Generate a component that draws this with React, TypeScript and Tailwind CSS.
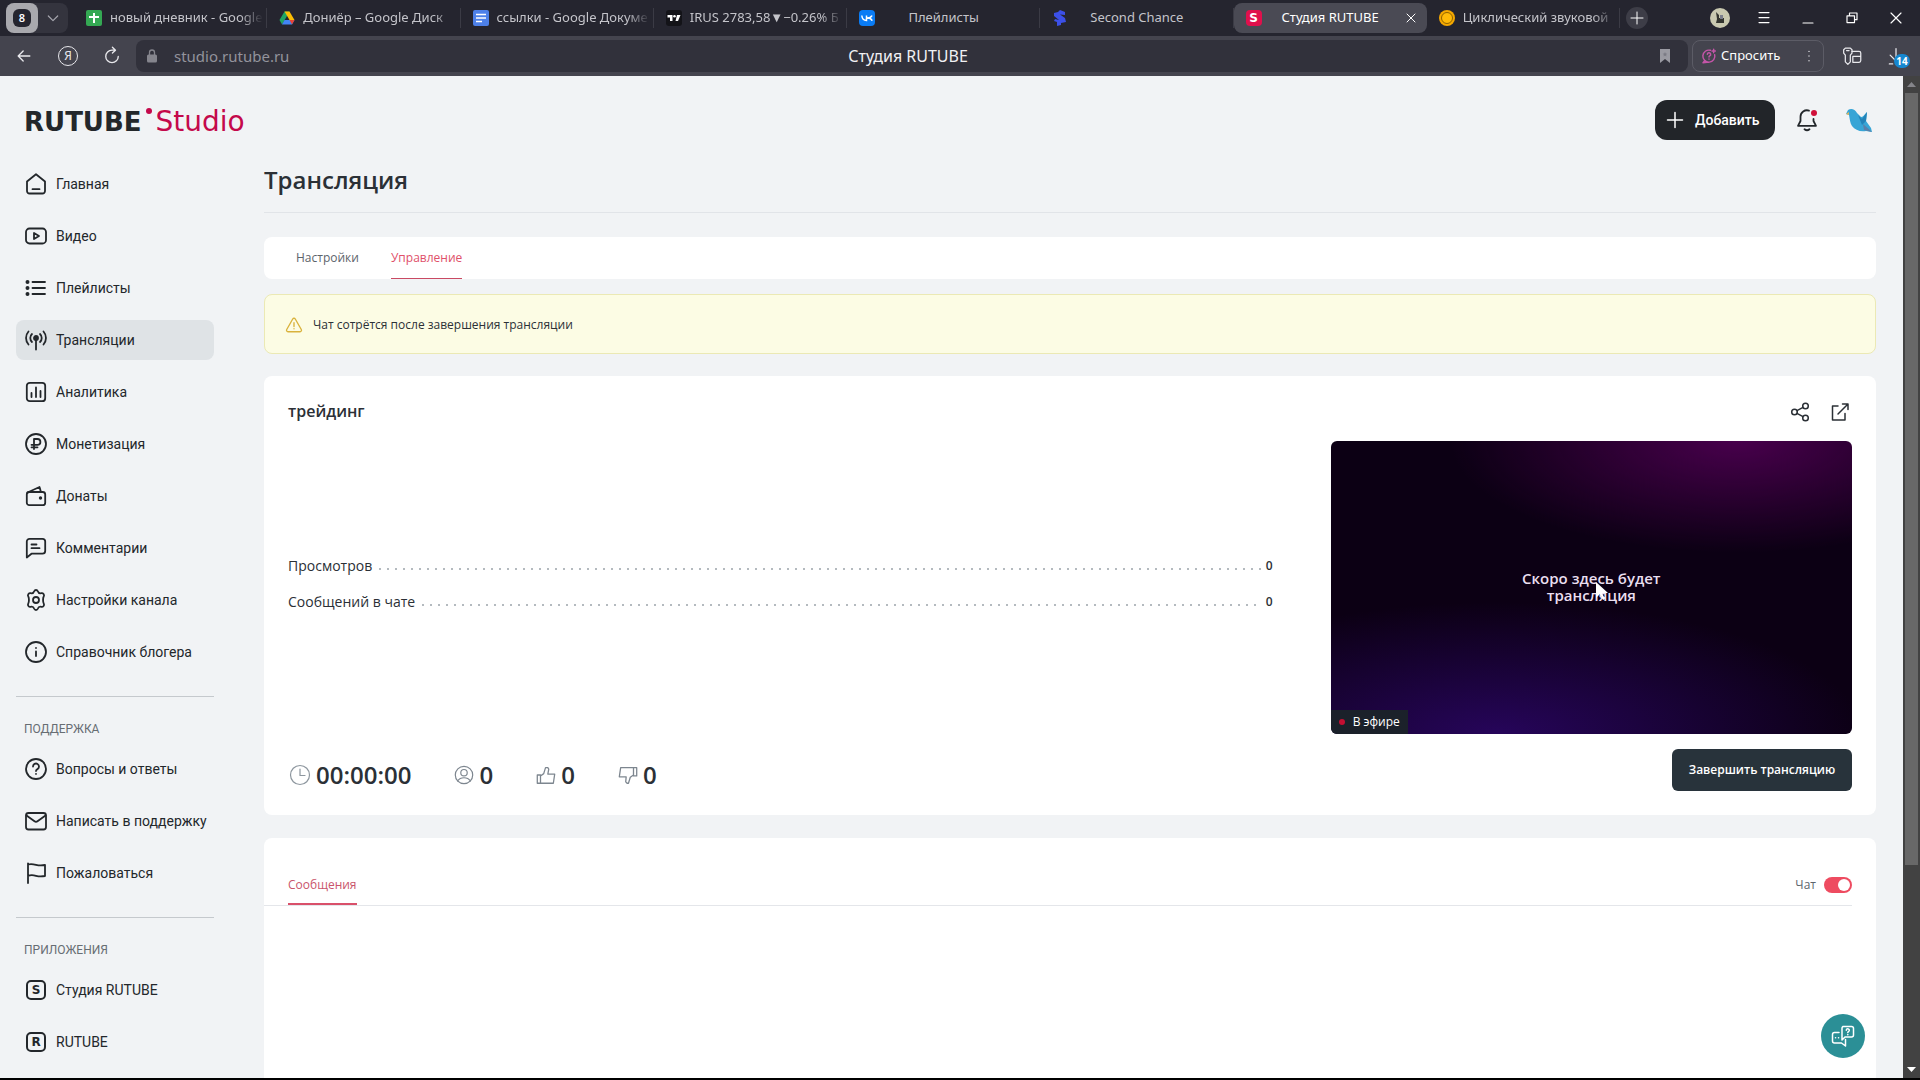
import { useState } from "react";
import type { ReactNode } from "react";

interface BrowserTab {
  title: string;
  icon: ReactNode;
  long?: boolean;
  active?: boolean;
}

interface NavItem {
  label: string;
  icon: ReactNode;
  active?: boolean;
}

interface IconProps {
  children: ReactNode;
  className?: string;
  strokeWidth?: number;
}

function Icon({ children, className = "size-6", strokeWidth = 1.8 }: IconProps) {
  return (
    <svg
      viewBox="0 0 24 24"
      className={`shrink-0 ${className}`}
      fill="none"
      stroke="currentColor"
      strokeWidth={strokeWidth}
      strokeLinecap="round"
      strokeLinejoin="round"
      aria-hidden="true"
    >
      {children}
    </svg>
  );
}

// Rounded square with a letter, used for the app links
function LetterIcon({ letter }: { letter: string }) {
  return (
    <span className="flex size-6 shrink-0 items-center justify-center">
      <span
        aria-hidden="true"
        className="flex size-5 items-center justify-center rounded-[5px] border-2 border-[#23272b] font-['DejaVu_Sans',sans-serif] text-xs leading-none font-bold"
      >
        {letter}
      </span>
    </span>
  );
}

const BROWSER_TABS: BrowserTab[] = [
  {
    title: "новый дневник - Google",
    long: true,
    icon: (
      <svg viewBox="0 0 16 16" className="size-4">
        <rect width="16" height="16" rx="2" fill="#34a853" />
        <path d="M8 3v10M3 7h10" stroke="#fff" strokeWidth="2" />
      </svg>
    ),
  },
  {
    title: "Дониёр – Google Диск",
    long: true,
    icon: (
      <svg viewBox="0 0 16 16" className="size-4">
        <path d="M5.500 1.500h5L8 6 3 14.500 .5 10z" fill="#1fa463" />
        <path d="M10.500 1.500 15.500 10h-5L5.500 1.500z" fill="#fbbc04" />
        <path d="M5.500 10h10L13 14.500H3z" fill="#4285f4" />
        <path d="M10.500 10h5L13 14.500z" fill="#ea4335" />
      </svg>
    ),
  },
  {
    title: "ссылки - Google Докуме",
    long: true,
    icon: (
      <svg viewBox="0 0 16 16" className="size-4">
        <rect width="16" height="16" rx="2" fill="#4d80e8" />
        <path d="M3 4.500h10M3 8h10M3 11.500h6" stroke="#fff" strokeWidth="1.600" />
      </svg>
    ),
  },
  {
    title: "IRUS 2783,58▼−0.26% Б",
    long: true,
    icon: (
      <svg viewBox="0 0 16 16" className="size-4">
        <rect width="16" height="16" rx="3" fill="#131318" />
        <path d="M1.500 5h5v6H4V7.500H1.500zM11 5h3.500L12 11H9.500z" fill="#fff" />
        <circle cx="8.500" cy="6.200" r="1.300" fill="#fff" />
      </svg>
    ),
  },
  {
    title: "Плейлисты",
    icon: (
      <svg viewBox="0 0 16 16" className="size-4">
        <rect width="16" height="16" rx="4" fill="#0a7cf5" />
        <path
          d="M2.800 5.500c.3 3 2 5 4.700 5V5.500M13 5.500c-.6 1.500-2 2.500-5 2.600 3 .1 4.500 1 5.200 2.600"
          fill="none"
          stroke="#fff"
          strokeWidth="1.500"
        />
      </svg>
    ),
  },
  {
    title: "Second Chance",
    icon: (
      <svg viewBox="0 0 16 16" className="size-4">
        <path d="M8 0 13 2v3L8 4.500 13 8l1 4-5 1v2l-4 1v-4l-3-1 1-2 4 1-5-4V3l4-1z" fill="#3c50e8" />
      </svg>
    ),
  },
  {
    title: "Студия RUTUBE",
    active: true,
    icon: (
      <span className="flex size-4 items-center justify-center rounded-[4px] bg-[#e0104c] font-['DejaVu_Sans',sans-serif] text-xs leading-none font-bold text-white">
        S
      </span>
    ),
  },
  {
    title: "Циклический звуковой",
    long: true,
    icon: (
      <svg viewBox="0 0 16 16" className="size-4">
        <circle cx="8" cy="8" r="8" fill="#f5a800" />
        <circle cx="8" cy="8" r="5.500" fill="#ffba08" stroke="#8f6200" strokeWidth="1" />
      </svg>
    ),
  },
];

const MAIN_NAV: NavItem[] = [
  {
    label: "Главная",
    icon: (
      <Icon>
        <path d="M3 9.500 12 2.300l9 7.200v9.500a2.500 2.500 0 0 1-2.500 2.500h-13A2.500 2.500 0 0 1 3 19z" />
        <path d="M8.500 17.200h7" />
      </Icon>
    ),
  },
  {
    label: "Видео",
    icon: (
      <Icon>
        <rect x="2" y="4.500" width="20" height="15" rx="3.500" />
        <path d="M10 9v6l5-3z" />
      </Icon>
    ),
  },
  {
    label: "Плейлисты",
    icon: (
      <Icon>
        <path d="M8.500 6H21M8.500 12H21M8.500 18H21" />
        <circle cx="3.500" cy="6" r="1.100" fill="currentColor" />
        <circle cx="3.500" cy="12" r="1.100" fill="currentColor" />
        <circle cx="3.500" cy="18" r="1.100" fill="currentColor" />
      </Icon>
    ),
  },
  {
    label: "Трансляции",
    active: true,
    icon: (
      <Icon>
        <circle cx="12" cy="10" r="2" fill="currentColor" />
        <path d="M12 11v10.500M8 14a5.500 5.500 0 0 1 0-8M16 6a5.500 5.500 0 0 1 0 8M4.500 16.500a9.800 9.800 0 0 1 0-13M19.500 3.500a9.800 9.800 0 0 1 0 13" />
      </Icon>
    ),
  },
  {
    label: "Аналитика",
    icon: (
      <Icon>
        <rect x="2.800" y="2.800" width="18.400" height="18.400" rx="3" />
        <path d="M7.500 13v4M12 7.500V17M16.500 11v6" />
      </Icon>
    ),
  },
  {
    label: "Монетизация",
    icon: (
      <Icon>
        <circle cx="12" cy="12" r="10" />
        <path d="M10 17V7h3.500a2.900 2.900 0 0 1 0 5.800H7.500M7.500 15.300h6" />
      </Icon>
    ),
  },
  {
    label: "Донаты",
    icon: (
      <Icon>
        <rect x="2.800" y="8" width="18.400" height="13.200" rx="2.500" />
        <path d="M3.500 8.500 15.500 3l1.300 4.500" />
        <circle cx="16.500" cy="14" r=".8" fill="currentColor" />
      </Icon>
    ),
  },
  {
    label: "Комментарии",
    icon: (
      <Icon>
        <path d="M2.800 21.500V5.500a2.700 2.700 0 0 1 2.700-2.700h13a2.700 2.700 0 0 1 2.700 2.700v9.500a2.700 2.700 0 0 1-2.700 2.700H7.500z" />
        <path d="M7.500 8.500h5M7.500 12.200h8" />
      </Icon>
    ),
  },
  {
    label: "Настройки канала",
    icon: (
      <Icon>
        <path d="M10.200 3.200c.6-1.600 3-1.600 3.600 0 .6 1.800 1.900 2.400 3.600 2 1.700-.4 3.300 1.600 2.400 3.100-1 1.600-1 5.800 0 7.400.9 1.500-.7 3.500-2.400 3.100-1.700-.4-3 .2-3.600 2-.6 1.600-3 1.600-3.600 0-.6-1.800-1.900-2.400-3.600-2-1.700.4-3.300-1.600-2.400-3.100 1-1.600 1-5.800 0-7.400-.9-1.500.7-3.500 2.400-3.100 1.700.4 3-.2 3.600-2z" />
        <circle cx="12" cy="12" r="3" />
      </Icon>
    ),
  },
  {
    label: "Справочник блогера",
    icon: (
      <Icon>
        <circle cx="12" cy="12" r="10" />
        <path d="M12 11.500v4.500M12 8v.1" />
      </Icon>
    ),
  },
];

const SUPPORT_NAV: NavItem[] = [
  {
    label: "Вопросы и ответы",
    icon: (
      <Icon>
        <circle cx="12" cy="12" r="10" />
        <path d="M9 9.500a3 3 0 1 1 4.500 2.600c-1 .6-1.500 1-1.500 2M12 16.800v.1" />
      </Icon>
    ),
  },
  {
    label: "Написать в поддержку",
    icon: (
      <Icon>
        <rect x="2" y="4" width="20" height="16.500" rx="2.500" />
        <path d="m2.500 6.500 8 5.800a2.500 2.500 0 0 0 3 0l8-5.800" />
      </Icon>
    ),
  },
  {
    label: "Пожаловаться",
    icon: (
      <Icon>
        <path d="M4 22V2.500M4 3.500c3-1 5-.5 8 .3s5 1 9 .2v11c-4 .8-6 .6-9-.2s-5-1-8 0" />
      </Icon>
    ),
  },
];

const APPS_NAV: NavItem[] = [
  { label: "Студия RUTUBE", icon: <LetterIcon letter="S" /> },
  { label: "RUTUBE", icon: <LetterIcon letter="R" /> },
];

const STATS = [
  { label: "Просмотров", value: 0 },
  { label: "Сообщений в чате", value: 0 },
];

function TabStrip() {
  return (
    <div className="flex h-9 shrink-0 items-center bg-[#25252f]">
      <div className="ml-1.5 flex h-[30px] w-[62px] shrink-0 items-center rounded-lg bg-[#34343e]">
        <button
          aria-label="Группы вкладок"
          className="flex h-full w-8 items-center justify-center rounded-lg bg-[#a9a9ae]"
        >
          <span className="flex size-[18px] items-center justify-center rounded-md bg-[#25252f] text-[11px] font-semibold text-white">
            8
          </span>
        </button>
        <button aria-label="Показать вкладки" className="flex flex-1 justify-center text-[#a5a5ad]">
          <Icon className="size-4">
            <path d="m5 9 7 7 7-7" />
          </Icon>
        </button>
      </div>
      <div className="ml-1.5 flex h-full min-w-0 flex-1 items-center">
        {BROWSER_TABS.map((tab) => (
          <div
            key={tab.title}
            className={`relative flex h-[30px] min-w-0 flex-1 items-center pr-1 pl-3 ${
              tab.active ? "rounded-lg bg-[#4a4a54] text-white" : "text-[#c4c4ca]"
            }`}
          >
            <span className="shrink-0">{tab.icon}</span>
            <a
              href="#"
              className={`min-w-0 flex-1 overflow-hidden text-[13px] whitespace-nowrap ${
                tab.long
                  ? "ml-2 [mask-image:linear-gradient(to_right,black_85%,transparent)]"
                  : "mr-6 text-center"
              }`}
            >
              {tab.title}
            </a>
            {tab.active && (
              <button aria-label="Закрыть вкладку" className="absolute right-2">
                <Icon className="size-4" strokeWidth={1.5}>
                  <path d="m6 6 12 12M18 6 6 18" />
                </Icon>
              </button>
            )}
            {!tab.active && <span className="absolute right-0 h-5 w-px bg-[#3b3b45]" />}
          </div>
        ))}
      </div>
      <button
        aria-label="Новая вкладка"
        className="ml-1.5 flex size-[22px] items-center justify-center rounded-full bg-[#3d3d47] text-white"
      >
        <Icon className="size-4" strokeWidth={1.5}>
          <path d="M12 3v18M3 12h18" />
        </Icon>
      </button>
      <div className="ml-[62px] flex items-center gap-6 pr-3.5 text-white">
        <button aria-label="Профиль">
          <svg viewBox="0 0 20 20" className="size-5">
            <circle cx="10" cy="10" r="10" fill="#c9c9b0" />
            <path d="M6 4l3 3v3h5v5H6l1-4z" fill="#33352f" />
            <path d="M10 7h3v4h-3z" fill="#7c7f8c" />
          </svg>
        </button>
        <button aria-label="Меню">
          <Icon className="size-5" strokeWidth={1.4}>
            <path d="M6 5.500h12M6 11.500h12M6 17.500h12" />
          </Icon>
        </button>
        <button aria-label="Свернуть">
          <Icon className="size-5" strokeWidth={1.4}>
            <path d="M6 18h12" />
          </Icon>
        </button>
        <button aria-label="Развернуть">
          <Icon className="size-5" strokeWidth={1.4}>
            <path d="M6 9.500h9v8H6zM9 9V6h9v8h-3" />
          </Icon>
        </button>
        <button aria-label="Закрыть">
          <Icon className="size-5" strokeWidth={1.4}>
            <path d="m6 6 12 12M18 6 6 18" />
          </Icon>
        </button>
      </div>
    </div>
  );
}

function Toolbar() {
  return (
    <div className="flex h-10 shrink-0 items-center bg-[#44444e] text-[#e8e8ec]">
      <div className="flex shrink-0 items-center gap-6 px-3.5">
        <button aria-label="Назад">
          <Icon className="size-5" strokeWidth={1.6}>
            <path d="M19 12H5M11 6l-6 6 6 6" />
          </Icon>
        </button>
        <button
          aria-label="Яндекс"
          className="flex size-5 items-center justify-center rounded-full border border-[#e8e8ec] text-xs leading-none"
        >
          Я
        </button>
        <button aria-label="Обновить">
          <Icon className="size-5" strokeWidth={1.6}>
            <path d="M19.500 12.500A7.500 7.500 0 1 1 12 5h4M12.500 1.500 16.200 5l-3.700 3.500" />
          </Icon>
        </button>
      </div>
      <div className="flex h-8 min-w-0 flex-1 items-center rounded-lg bg-[#31313b] px-2.5">
        <div className="flex min-w-0 flex-1 items-center gap-4">
          <svg viewBox="0 0 12 16" className="h-4 w-3 shrink-0" fill="#85858d">
            <rect x="1" y="6.500" width="10" height="8" rx="1.500" />
            <path d="M3.500 7V4.500a2.500 2.500 0 0 1 5 0V7" fill="none" stroke="#85858d" strokeWidth="1.300" />
          </svg>
          <input
            aria-label="Адрес"
            defaultValue="studio.rutube.ru"
            className="min-w-0 flex-1 bg-transparent text-[15px] text-[#93939c] outline-none"
          />
        </div>
        <span className="text-base leading-5 text-[#f0f0f3]">Студия RUTUBE</span>
        <div className="flex flex-1 justify-end pr-2">
          <button aria-label="Добавить в закладки">
            <svg viewBox="0 0 10 14" className="h-3.5 w-2.5" fill="#9a9aa2">
              <path d="M0 0h10v14l-5-4-5 4z" />
              <path d="m5 3 .7 1.500 1.600.2-1.200 1.100.3 1.600L5 6.600l-1.400.8.300-1.600-1.200-1.100 1.600-.2z" fill="#7a7a84" />
            </svg>
          </button>
        </div>
      </div>
      <div className="ml-1 flex h-8 w-[132px] shrink-0 items-center rounded-lg border border-[#5c5c66] pl-2">
        <button className="flex items-center gap-1 text-[13px] text-white">
          <Icon className="size-4 text-[#c455a8]" strokeWidth={2.2}>
            <path d="M14 3.500A9 9 0 1 0 20.500 10M5 20l-2 2 6-.5M19 2v5M16.500 4.500h5" />
            <path d="M9.500 9.500a2.500 2.500 0 1 1 3.500 2.300c-.7.300-1 .8-1 1.700M12 16.500v.2" />
          </Icon>
          Спросить
        </button>
        <button aria-label="Ещё" className="ml-auto flex w-7 justify-center">
          <Icon className="size-4" strokeWidth={2}>
            <path d="M12 5v.1M12 12v.1M12 19v.1" />
          </Icon>
        </button>
      </div>
      <button aria-label="Пароли и карты" className="ml-[18px]">
        <Icon className="size-5" strokeWidth={1.5}>
          <path d="M4 11 2 8.500v-4L4 2.500h6l2 2v4L10 11v8l-3 3-3-3zM5.500 5.500h3" />
          <path d="M12 6.500h8.500a2 2 0 0 1 2 2v9a2 2 0 0 1-2 2H13v-7h9.500" />
        </Icon>
      </button>
      <button aria-label="Загрузки" className="relative mr-3.5 ml-6">
        <Icon className="size-5" strokeWidth={1.5}>
          <path d="M12 3v14M5 11l7 7 7-7M4 21.500h4" />
        </Icon>
        <span className="absolute top-2 left-2 flex h-3.5 w-4 items-center justify-center rounded-full bg-[#1687d0] text-[10px] leading-none font-bold text-white">
          14
        </span>
      </button>
    </div>
  );
}

function NavList({ items }: { items: NavItem[] }) {
  return (
    <ul className="flex flex-col gap-3">
      {items.map((item) => (
        <li key={item.label}>
          <a
            href="#"
            aria-current={item.active ? "page" : undefined}
            className={`flex h-10 items-center gap-2 rounded-lg px-2 text-sm whitespace-nowrap ${
              item.active ? "bg-[#dfe3e6]" : ""
            }`}
          >
            {item.icon}
            {item.label}
          </a>
        </li>
      ))}
    </ul>
  );
}

function Sidebar() {
  return (
    <nav className="w-[264px] shrink-0 pr-[50px] pl-4 font-[Roboto,sans-serif] text-[#23272b]">
      <NavList items={MAIN_NAV} />
      <hr className="mt-6 border-[#c5c9cd]" />
      <h2 className="mt-5 mb-2 px-2 text-xs leading-6 text-[#676d73]">ПОДДЕРЖКА</h2>
      <NavList items={SUPPORT_NAV} />
      <hr className="mt-6 border-[#c5c9cd]" />
      <h2 className="mt-5 mb-2 px-2 text-xs leading-6 text-[#676d73]">ПРИЛОЖЕНИЯ</h2>
      <NavList items={APPS_NAV} />
    </nav>
  );
}

function PageHeader() {
  return (
    <header className="flex h-[88px] shrink-0 items-center pr-[30px] pl-6">
      <a
        href="#"
        aria-label="RUTUBE Studio"
        className="flex items-baseline pt-1 font-['DejaVu_Sans',sans-serif] leading-none"
      >
        <span className="text-[26px] font-bold text-[#23272b]">RUTUBE</span>
        <span className="mx-1 size-1.5 self-start rounded-full bg-[#c4094b]" />
        <span className="text-[28px] text-[#c4094b]">Studio</span>
      </a>
      <button className="ml-auto flex h-10 w-[120px] items-center gap-2.5 rounded-xl bg-[#222529] px-2.5 font-[Roboto,sans-serif] text-sm font-medium text-white">
        <Icon className="size-5">
          <path d="M12 3v18M3 12h18" />
        </Icon>
        Добавить
      </button>
      <button aria-label="Уведомления" className="relative ml-5 text-[#23272b]">
        <Icon>
          <path d="M14 2.600A6.500 6.500 0 0 0 5.500 8.800V13L3 17.800h18L18.500 13v-2" />
          <path d="M9.500 21.200a4 4 0 0 0 5 0" />
        </Icon>
        <span className="absolute top-0.5 right-0.5 size-1.5 rounded-full bg-[#d0103a]" />
      </button>
      <button aria-label="Аккаунт" className="ml-[26px]">
        <svg viewBox="0 0 28 28" className="size-7">
          <path d="M1 8 3 4c3-2 7-1 9 3l4 4c2 0 3-2 6-5l-1 9 5 7 1 4-6-1c-6 1-11-1-14-5-2-3-2-6-3-11z" fill="#37a5d6" />
          <path d="m13 9 4 4 5-7-1 9-4 4z" fill="#2383b8" />
          <path d="m18 18 9 8-8-2z" fill="#5b7fa8" />
          <path d="M1 8l3-2v3z" fill="#e0b45a" />
        </svg>
      </button>
    </header>
  );
}

function StreamPreview() {
  return (
    <div className="relative flex aspect-video w-1/3 shrink-0 items-center justify-center overflow-hidden rounded-md bg-[#0c0014] bg-[radial-gradient(ellipse_55%_38%_at_78%_0%,#48004c,transparent),radial-gradient(ellipse_70%_45%_at_32%_100%,#26055a,transparent)]">
      <p className="w-40 pb-0.5 text-center text-[15px] leading-[17px] font-semibold text-[#eadff0]">
        Скоро здесь будет трансляция
      </p>
      <span className="absolute bottom-0 left-0 flex h-6 items-center gap-2 bg-[#1b212a] px-2 text-xs text-white">
        <span className="size-1.5 rounded-full bg-[#c40f32]" />В эфире
      </span>
      {/* Pointer */}
      <svg viewBox="0 0 12 19" className="absolute top-[141px] left-[265px] h-[19px] w-3">
        <path d="M0 0v16l4-4 3 6 2-1-3-6h6z" fill="#fff" />
      </svg>
    </div>
  );
}

function StreamCard() {
  return (
    <section className="mt-[22px] rounded-lg bg-white px-6 pt-[23px] pb-6">
      <div className="flex h-6 items-center gap-4">
        <h2 className="flex-1 text-base leading-6 font-semibold">трейдинг</h2>
        <button aria-label="Поделиться">
          <Icon strokeWidth={1.5}>
            <circle cx="6.500" cy="13" r="2.800" />
            <circle cx="17.500" cy="7" r="2.800" />
            <circle cx="17.500" cy="19" r="2.800" />
            <path d="m9 11.600 6-3.200M9 14.400l6 3.200" />
          </Icon>
        </button>
        <button aria-label="Открыть">
          <Icon strokeWidth={1.5}>
            <path d="M10 7H4.500v14H17v-6.500M10 15 20 5M14.500 5H20v5.500" />
          </Icon>
        </button>
      </div>

      <div className="mt-[18px] flex gap-[58px]">
        <dl className="flex min-w-0 flex-1 flex-col justify-center pb-2">
          {STATS.map((stat) => (
            <div key={stat.label} className="flex h-9 items-center gap-1 text-sm">
              <dt>{stat.label}</dt>
              <span className="mt-1.5 h-0.5 flex-1 bg-[radial-gradient(circle_at_4px_1px,#b4babf_1px,transparent_1px)] bg-[length:8px_2px]" />
              <dd className="text-xs font-semibold">{stat.value}</dd>
            </div>
          ))}
        </dl>
        <StreamPreview />
      </div>

      <div className="mt-[15px] flex items-center">
        <div className="flex flex-1 items-center gap-[42px] pt-2.5 text-2xl leading-[30px] font-semibold">
          <span className="flex items-center gap-1">
            <Icon className="size-6 text-[#8d969e]" strokeWidth={1.2}>
              <circle cx="12" cy="12" r="9.500" />
              <path d="M12 6v6.500h5" />
            </Icon>
            00:00:00
          </span>
          <span className="flex items-center gap-1">
            <Icon className="size-[22px] text-[#7d868f]" strokeWidth={1.3}>
              <circle cx="12" cy="12" r="9.500" />
              <circle cx="12" cy="9.500" r="3.500" />
              <path d="M5 18.500c2-3 4-3.500 7-3.500s5 .5 7 3.500" />
            </Icon>
            0
          </span>
          <span className="flex items-center gap-1">
            <Icon className="size-[22px] text-[#7d868f]" strokeWidth={1.4}>
              <path d="M2.500 12h3.500v9H2.500zM6 13l3.500-2.500L11.500 4h2.500l1 1.500-1 5.500h7.500l-1.500 10H6" />
            </Icon>
            0
          </span>
          <span className="flex items-center gap-1">
            <Icon className="size-[22px] text-[#7d868f]" strokeWidth={1.4}>
              <path d="M18 4h3.500v9H18zM18 12l-3.500 2.500-2 6.500H11l-1.500-1.500.5-5.500H2.500L4 4h14" />
            </Icon>
            0
          </span>
        </div>
        <button className="h-[42px] min-w-[180px] rounded-md bg-[#28333b] px-4 text-xs font-semibold text-white">
          Завершить трансляцию
        </button>
      </div>
    </section>
  );
}

function ChatCard() {
  const [chatEnabled, setChatEnabled] = useState(true);

  return (
    <section className="mt-[23px] min-h-60 flex-1 rounded-t-lg bg-white">
      <div className="mr-6 flex h-[68px] items-end border-b border-[#e4e6ea] pl-6">
        <button className="border-b-2 border-[#d9506a] pb-2 text-xs leading-5 text-[#c9546b]">
          Сообщения
        </button>
        <label className="mb-3 ml-auto flex items-center gap-2 text-xs leading-4 text-[#5d646b]">
          Чат
          <input
            type="checkbox"
            role="switch"
            checked={chatEnabled}
            onChange={(e) => setChatEnabled(e.target.checked)}
            className="h-4 w-7 appearance-none rounded-full bg-gray-300 p-0.5 before:block before:size-3 before:rounded-full before:bg-white checked:bg-[#ee4b60] checked:before:ml-3"
          />
        </label>
      </div>
    </section>
  );
}

function Scrollbar() {
  return (
    <div className="flex w-[17px] shrink-0 flex-col items-center bg-[#424242]">
      <svg viewBox="0 0 17 17" className="size-[17px]">
        <path d="m4 11 4.500-5 4.500 5z" fill="#85858a" />
      </svg>
      <div className="h-[77%] w-[13px] bg-[#686868]" />
      <svg viewBox="0 0 17 17" className="mt-auto size-[17px]">
        <path d="m4 6 4.500 5 4.500-5z" fill="#fff" />
      </svg>
    </div>
  );
}

export default function App() {
  return (
    <div className="flex h-screen flex-col overflow-hidden border-b-2 border-black bg-[#25252f] font-['Noto_Sans',sans-serif]">
      <TabStrip />
      <Toolbar />
      <div className="flex min-h-0 flex-1">
        <div className="relative flex min-w-0 flex-1 flex-col overflow-hidden bg-[#f1f3f5]">
          <PageHeader />
          <div className="flex min-h-0 flex-1">
            <Sidebar />
            <main className="flex min-w-0 flex-1 flex-col pr-[27px] font-['Open_Sans',sans-serif] text-[#2b3036]">
              <h1 className="text-2xl leading-8 font-semibold">Трансляция</h1>
              <hr className="mt-4 border-[#e1e4e8]" />

              <div className="mt-6 flex h-[42px] shrink-0 gap-8 rounded-lg bg-white px-8 text-xs">
                <a href="#" className="flex items-center text-[#5d646b]">
                  Настройки
                </a>
                <a
                  href="#"
                  aria-current="page"
                  className="flex items-center border-b border-[#c94a63] text-[#e0506a]"
                >
                  Управление
                </a>
              </div>

              <div
                role="alert"
                className="mt-[15px] flex h-[60px] shrink-0 items-center gap-2.5 rounded-lg border border-[#ebe9b4] bg-[#fcfce4] px-5 pt-0.5 text-xs"
              >
                <Icon className="size-[18px] text-[#d9b23c]">
                  <path d="M10.300 4a2 2 0 0 1 3.400 0l8 14a2 2 0 0 1-1.700 3H4a2 2 0 0 1-1.700-3zM12 9v5M12 17v.1" />
                </Icon>
                Чат сотрётся после завершения трансляции
              </div>

              <StreamCard />
              <ChatCard />
            </main>
          </div>

          {/* Support widget */}
          <button
            aria-label="Помощь"
            className="absolute right-[38px] bottom-5 flex size-11 items-center justify-center rounded-full bg-[#2b8f96] text-white"
          >
            <Icon className="size-6" strokeWidth={1.5}>
              <path d="M12 2.500h8.500a2 2 0 0 1 2 2V11a2 2 0 0 1-2 2H14l-3 3V4.500a2 2 0 0 1 1-2z" />
              <path d="M8 8.500H3.500a2 2 0 0 0-2 2V17a2 2 0 0 0 2 2h7l4 3v-6.500M4.500 13.800h.1M7.500 13.800h.1" />
              <path d="M15.300 6.200a1.500 1.500 0 1 1 2.200 1.400c-.5.300-.7.500-.7 1M16.800 10.600v.1" />
            </Icon>
          </button>
        </div>
        <Scrollbar />
      </div>
    </div>
  );
}
